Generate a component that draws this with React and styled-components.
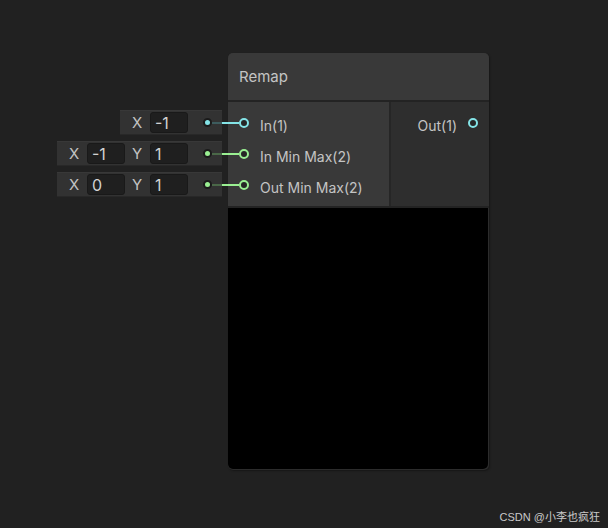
import React from "react";
import styled, { createGlobalStyle } from "styled-components";

const FLOAT = "#84e4e7";
const VEC2 = "#9aef92";
const FLOAT_DIM = "#3d5c5e";
const VEC2_DIM = "#4a6848";

const Global = createGlobalStyle`
  html, body {
    margin: 0;
    padding: 0;
    background: #212121;
  }
  body {
    font-family: Inter, "Noto Sans", "Liberation Sans", sans-serif;
    -webkit-font-smoothing: antialiased;
  }
`;

const Stage = styled.div`
  position: relative;
  width: 608px;
  height: 528px;
  box-sizing: border-box;
  padding-top: 53px;
  display: flex;
  align-items: flex-start;
  background: #212121;
  overflow: hidden;
`;

const Inputs = styled.div`
  width: 228px;
  padding-top: 57px;
  display: flex;
  flex-direction: column;
  align-items: flex-end;
  gap: 6px;
`;

const InputRow = styled.div`
  display: flex;
  align-items: center;
  height: 25px;
`;

const ValueBox = styled.div`
  display: flex;
  align-items: center;
  box-sizing: border-box;
  height: 25px;
  padding-left: 8px;
  background: #323232;
  border-top: 1px solid #383838;
  border-bottom: 1px solid #282828;
`;

const Axis = styled.span`
  width: 18px;
  margin-left: ${(p) => (p.$first ? 0 : 3)}px;
  margin-right: 4px;
  text-align: center;
  font-size: 15px;
  color: #c2c2c2;
`;

const Field = styled.div`
  box-sizing: border-box;
  width: 38px;
  height: 21px;
  padding-left: 4px;
  display: flex;
  align-items: center;
  background: #1f1f1f;
  border: 1px solid #191919;
  border-radius: 3px;
  font-size: 16px;
  color: #d2d2d2;
`;

const Dot = styled.span`
  box-sizing: border-box;
  width: 9px;
  height: 9px;
  margin-left: 15px;
  border-radius: 50%;
  background: ${(p) => p.$color};
  border: 2px solid #1b1b1b;
  flex: none;
`;

const Wire = styled.span`
  display: block;
  width: ${(p) => p.$w}px;
  height: 2px;
  background: ${(p) => p.$color};
  flex: none;
`;

const Node = styled.div`
  width: 261px;
  display: flex;
  flex-direction: column;
  border-radius: 5px;
  overflow: hidden;
  background: #2c2c2c;
  box-shadow: 1px 1px 2px rgba(0, 0, 0, 0.35);
`;

const Header = styled.div`
  height: 47px;
  display: flex;
  align-items: center;
  padding-left: 11px;
  background: #393939;
  border-bottom: 2px solid #232323;
  font-size: 15px;
  color: #c4c4c4;
`;

const Ports = styled.div`
  display: flex;
  height: 104px;
  border-bottom: 2px solid #232323;
`;

const InSide = styled.div`
  width: 163px;
  box-sizing: border-box;
  padding-top: 5px;
  background: #393939;
  border-right: 2px solid #262626;
`;

const OutSide = styled.div`
  flex: 1;
  padding-top: 5px;
  background: #2e2e2e;
`;

const PortRow = styled.div`
  height: 31px;
  display: flex;
  align-items: center;
  justify-content: ${(p) => (p.$out ? "flex-end" : "flex-start")};
  padding-right: ${(p) => (p.$out ? 11 : 0)}px;
`;

const Socket = styled.span`
  box-sizing: border-box;
  width: 10px;
  height: 10px;
  border-radius: 50%;
  border: 2px solid ${(p) => p.$color};
  background: #262626;
  flex: none;
`;

const PortLabel = styled.span`
  font-size: 14px;
  color: #c4c4c4;
  margin-top: 5px;
  margin-left: ${(p) => (p.$out ? 0 : 11)}px;
  margin-right: ${(p) => (p.$out ? 11 : 0)}px;
`;

const Preview = styled.div`
  height: 261px;
  background: #000;
  border-radius: 0 0 5px 5px;
  margin: 0 1px 1px 0;
`;

const Watermark = styled.div`
  position: absolute;
  right: 8px;
  bottom: 4px;
  font-family: "Liberation Sans", "Noto Sans CJK SC", sans-serif;
  font-size: 11px;
  color: #c9c9c9;
`;

const inputs = [
  { color: FLOAT, dim: FLOAT_DIM, values: [["X", "-1"]] },
  { color: VEC2, dim: VEC2_DIM, values: [["X", "-1"], ["Y", "1"]] },
  { color: VEC2, dim: VEC2_DIM, values: [["X", "0"], ["Y", "1"]] },
];

const ports = [
  { label: "In(1)", color: FLOAT },
  { label: "In Min Max(2)", color: VEC2 },
  { label: "Out Min Max(2)", color: VEC2 },
];

export default function App() {
  return (
    <>
      <Global />
      <Stage>
        <Inputs>
          {inputs.map((row, i) => (
            <InputRow key={i}>
              <ValueBox>
                {row.values.map(([axis, v], j) => (
                  <React.Fragment key={axis}>
                    <Axis $first={j === 0}>{axis}</Axis>
                    <Field>{v}</Field>
                  </React.Fragment>
                ))}
                <Dot $color={row.color} />
                <Wire $w={10} $color={row.dim} />
              </ValueBox>
              <Wire $w={6} $color={row.color} />
            </InputRow>
          ))}
        </Inputs>
        <Node>
          <Header>Remap</Header>
          <Ports>
            <InSide>
              {ports.map((p) => (
                <PortRow key={p.label}>
                  <Wire $w={11} $color={p.color} />
                  <Socket $color={p.color} />
                  <PortLabel>{p.label}</PortLabel>
                </PortRow>
              ))}
            </InSide>
            <OutSide>
              <PortRow $out>
                <PortLabel $out>Out(1)</PortLabel>
                <Socket $color={FLOAT} />
              </PortRow>
            </OutSide>
          </Ports>
          <Preview />
        </Node>
        <Watermark>CSDN @小李也疯狂</Watermark>
      </Stage>
    </>
  );
}
